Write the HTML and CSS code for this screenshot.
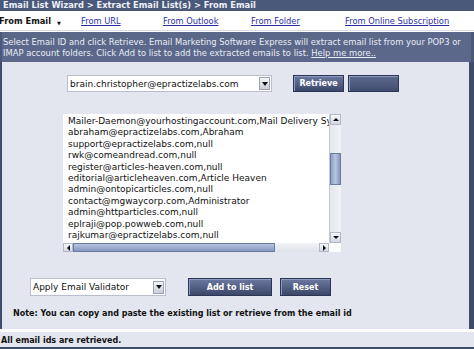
FILE: index.html
```html
<!DOCTYPE html>
<html>
<head>
<meta charset="utf-8">
<link rel="stylesheet" href="styles.css">
</head>
<body>
<div class="frame">
  <div class="title">Email List Wizard &gt; Extract Email List(s) &gt; From Email</div>
  <div class="tabs">
    <span class="tab current">From Email <span class="caret">&#9660;</span></span>
    <a class="tab">From URL</a>
    <a class="tab">From Outlook</a>
    <a class="tab">From Folder</a>
    <a class="tab">From Online Subscription</a>
  </div>
  <div class="desc">Select Email ID and click Retrieve. Email Marketing Software Express will extract email list from your POP3 or IMAP account folders. Click Add to list to add the extracted emails to list. <a class="help">Help me more..</a></div>
  <div class="main">
    <div class="row1">
      <div class="select sel1"><span class="val">brain.christopher@epractizelabs.com</span><span class="arrow"><i></i></span></div>
      <div class="btn retrieve">Retrieve</div>
      <div class="btn blank"></div>
    </div>
    <div class="list">
      <div class="content">
        <div>Mailer-Daemon@yourhostingaccount.com,Mail Delivery Sy</div>
        <div>abraham@epractizelabs.com,Abraham</div>
        <div>support@epractizelabs.com,null</div>
        <div>rwk@comeandread.com,null</div>
        <div>register@articles-heaven.com,null</div>
        <div>editorial@articleheaven.com,Article Heaven</div>
        <div>admin@ontopicarticles.com,null</div>
        <div>contact@mgwaycorp.com,Administrator</div>
        <div>admin@httparticles.com,null</div>
        <div>eplraji@pop.powweb.com,null</div>
        <div>rajkumar@epractizelabs.com,null</div>
      </div>
      <div class="vscroll">
        <span class="sbtn"><i class="up"></i></span>
        <span class="vtrack1"></span>
        <span class="vthumb"></span>
        <span class="vtrack2"></span>
        <span class="sbtn"><i class="down"></i></span>
      </div>
      <div class="hscroll">
        <span class="sbtn"><i class="left"></i></span>
        <span class="hthumb"></span>
        <span class="htrack"></span>
        <span class="sbtn"><i class="right"></i></span>
      </div>
      <div class="corner"></div>
    </div>
    <div class="row3">
      <div class="select sel2"><span class="val">Apply Email Validator</span><span class="arrow"><i></i></span></div>
      <div class="btn add">Add to list</div>
      <div class="btn reset">Reset</div>
    </div>
    <div class="note">Note: You can copy and paste the existing list or retrieve from the email id</div>
  </div>
  <div class="status">All email ids are retrieved.</div>
</div>
</body>
</html>
```

FILE: styles.css
```css
html, body {
  margin: 0;
  padding: 0;
  background: #ffffff;
}
body {
  width: 474px;
  height: 349px;
  overflow: hidden;
  font-family: "DejaVu Sans", Verdana, sans-serif;
}
.frame {
  width: 474px;
  height: 349px;
  display: flex;
  flex-direction: column;
}
.title {
  height: 11px;
  flex: none;
  background: #4a5879;
  color: #eef1f8;
  font-size: 8.3px;
  font-weight: bold;
  line-height: 11px;
  padding-left: 3px;
  white-space: nowrap;
}
.tabs {
  height: 19px;
  flex: none;
  background: #ffffff;
  display: grid;
  grid-template-columns: 82px 82px 88px 94px auto;
  align-items: center;
  margin-left: -1px;
  border-bottom: 1px solid #d9dde8;
  font-size: 8.3px;
  white-space: nowrap;
}
.tab {
  color: #2b2fa6;
  text-decoration: underline;
}
.tab.current {
  color: #111111;
  font-weight: bold;
  text-decoration: none;
}
.caret {
  font-size: 5px;
  vertical-align: -1px;
  margin-left: 3px;
}
.desc {
  height: 30px;
  flex: none;
  margin-top: 1px;
  background: #5b6889;
  color: #e9edf6;
  font-size: 8.4px;
  line-height: 11px;
  padding: 5px 3px 0 1px;
  box-sizing: border-box;
  border-left: 2px solid #4a5879;
  border-right: 3px solid #4a5879;
}
.help {
  color: #e9edf6;
  text-decoration: underline;
}
.main {
  height: 267px;
  flex: none;
  background: #e3e6ee;
  border-left: 2px solid #3f4b6b;
  border-right: 5px solid #3f4b6b;
  box-sizing: border-box;
  display: flex;
  flex-direction: column;
}
.row1 {
  display: flex;
  align-items: center;
  margin-top: 13px;
  padding-left: 65px;
  height: 17px;
}
.select {
  height: 17px;
  background: #ffffff;
  border: 1px solid #b9bfcf;
  box-sizing: border-box;
  display: flex;
  align-items: center;
  font-size: 9px;
  color: #111111;
  white-space: nowrap;
}
.select .val {
  flex: 1;
  padding-left: 2px;
  overflow: hidden;
}
.select .arrow {
  width: 11px;
  height: 13px;
  margin-right: 1px;
  background: linear-gradient(#f4f5f8, #c9ced9);
  border: 1px solid #9aa1b3;
  box-sizing: border-box;
  display: flex;
  align-items: center;
  justify-content: center;
}
.select .arrow i {
  width: 0;
  height: 0;
  border-left: 3px solid transparent;
  border-right: 3px solid transparent;
  border-top: 4px solid #111111;
}
.sel1 {
  width: 205px;
}
.btn {
  height: 17px;
  box-sizing: border-box;
  background: linear-gradient(#6c79a0, #3b4769);
  border: 1px solid #2c3654;
  box-shadow: inset 1px 1px 0 #8e9abd;
  color: #ffffff;
  font-size: 8px;
  font-weight: bold;
  display: flex;
  align-items: center;
  justify-content: center;
}
.retrieve {
  width: 51px;
  margin-left: 21px;
}
.blank {
  width: 51px;
  margin-left: 4px;
  background: linear-gradient(#5d6a8f, #414d70);
}
.list {
  margin-top: 22px;
  margin-left: 61px;
  width: 278px;
  height: 138px;
  background: #ffffff;
  display: grid;
  grid-template-columns: 266px 12px;
  grid-template-rows: 129px 9px;
}
.content {
  padding: 2px 0 0 5px;
  font-size: 9px;
  line-height: 11.4px;
  color: #111111;
  white-space: nowrap;
  overflow: hidden;
}
.vscroll {
  display: flex;
  flex-direction: column;
  background: #e9ebf0;
  border-left: 1px solid #c3c8d4;
}
.sbtn {
  background: linear-gradient(#f7f8fa, #d3d7e0);
  border: 1px solid #b2b8c8;
  box-sizing: border-box;
  display: flex;
  align-items: center;
  justify-content: center;
}
.vscroll .sbtn {
  height: 11px;
}
.vtrack1 {
  height: 28px;
  background: linear-gradient(90deg, #e3e6ed, #f2f3f6);
}
.vthumb {
  height: 32px;
  background: linear-gradient(90deg, #8ea0c8, #b8c5e0 50%, #8597c0);
  border: 1px solid #6a7ca6;
  box-sizing: border-box;
}
.vtrack2 {
  flex: 1;
  background: linear-gradient(90deg, #e3e6ed, #f2f3f6);
}
.hscroll {
  display: flex;
  background: #e9ebf0;
}
.hscroll .sbtn {
  width: 10px;
}
.hthumb {
  width: 202px;
  background: linear-gradient(#b8c5e0, #8597c0);
  border: 1px solid #6a7ca6;
  box-sizing: border-box;
}
.htrack {
  flex: 1;
  background: linear-gradient(#f2f3f6, #dfe2ea);
}
.corner {
  background: #ffffff;
}
.up, .down, .left, .right {
  width: 0;
  height: 0;
}
.up {
  border-left: 3px solid transparent;
  border-right: 3px solid transparent;
  border-bottom: 3px solid #111111;
}
.down {
  border-left: 3px solid transparent;
  border-right: 3px solid transparent;
  border-top: 3px solid #111111;
}
.left {
  border-top: 3px solid transparent;
  border-bottom: 3px solid transparent;
  border-right: 3px solid #111111;
}
.right {
  border-top: 3px solid transparent;
  border-bottom: 3px solid transparent;
  border-left: 3px solid #111111;
}
.row3 {
  display: flex;
  align-items: center;
  margin-top: 26px;
  padding-left: 28px;
  height: 18px;
}
.sel2 {
  width: 136px;
  height: 18px;
}
.add {
  width: 84px;
  height: 18px;
  margin-left: 22px;
}
.reset {
  width: 51px;
  height: 18px;
  margin-left: 8px;
}
.note {
  margin-top: 13px;
  padding-left: 11px;
  font-size: 8px;
  font-weight: bold;
  color: #111111;
  white-space: nowrap;
}
.status {
  flex: 1;
  background: #e3e6ee;
  border-top: 3px solid #ffffff;
  border-bottom: 2px solid #3f4b6b;
  font-size: 8px;
  font-weight: bold;
  color: #111111;
  padding-left: 1px;
  padding-top: 4px;
  box-sizing: border-box;
  white-space: nowrap;
}
```
